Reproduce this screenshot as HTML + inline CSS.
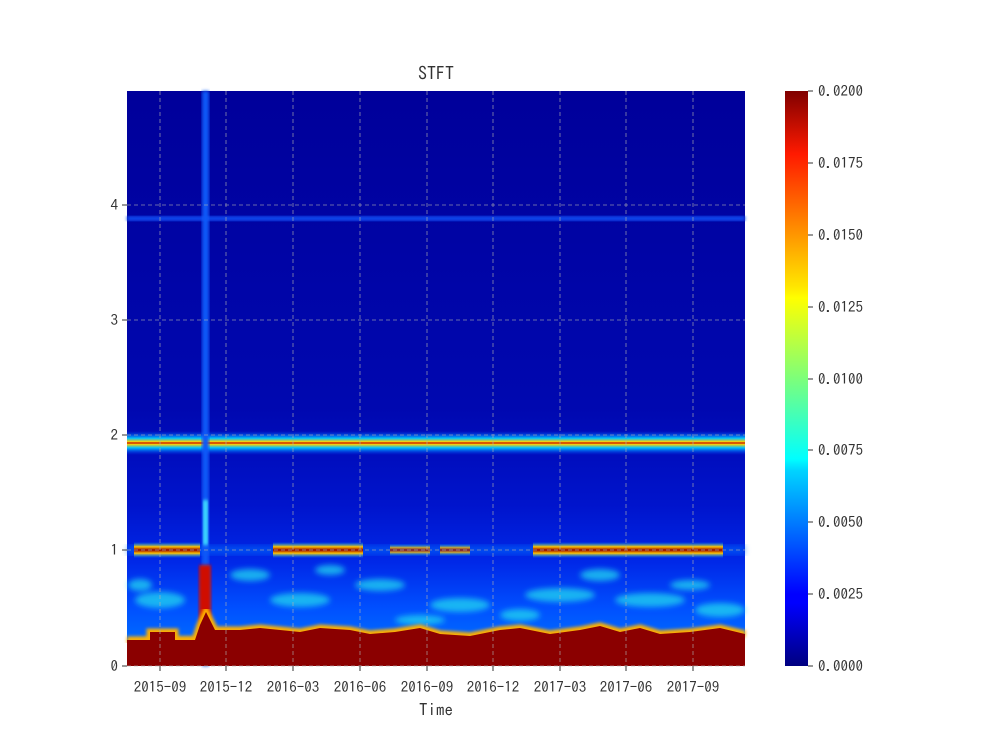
<!DOCTYPE html>
<html><head><meta charset="utf-8"><style>
body{margin:0;background:#fff;}
svg text{font-family:"IPAGothic","Liberation Sans",sans-serif;fill:#333;}
</style></head><body>
<svg width="1000" height="750" viewBox="0 0 1000 750" xmlns="http://www.w3.org/2000/svg">
<defs>
<linearGradient id="cb" x1="0" y1="1" x2="0" y2="0">
<stop offset="0" stop-color="#000080"/><stop offset="0.11" stop-color="#0000ff"/>
<stop offset="0.125" stop-color="#0000ff"/><stop offset="0.34" stop-color="#00d4ff"/>
<stop offset="0.36" stop-color="#0ff"/><stop offset="0.5" stop-color="#7dff7a"/>
<stop offset="0.64" stop-color="#ff0"/><stop offset="0.66" stop-color="#ffe600"/>
<stop offset="0.89" stop-color="#ff1a00"/><stop offset="1" stop-color="#800000"/>
</linearGradient>
<linearGradient id="bg" x1="0" y1="0" x2="0" y2="1">
<stop offset="0" stop-color="#00009a"/><stop offset="0.55" stop-color="#0008b0"/>
<stop offset="0.72" stop-color="#0014cc"/><stop offset="0.82" stop-color="#0028e8"/>
<stop offset="0.9" stop-color="#0050ff"/><stop offset="1" stop-color="#0080ff"/>
</linearGradient>
<linearGradient id="l2" x1="0" y1="0" x2="0" y2="1">
<stop offset="0" stop-color="#0040ff" stop-opacity="0"/><stop offset="0.3" stop-color="#00c0ff"/>
<stop offset="0.45" stop-color="#ffd000"/><stop offset="0.5" stop-color="#c00000"/>
<stop offset="0.55" stop-color="#ffd000"/><stop offset="0.7" stop-color="#00c0ff"/>
<stop offset="1" stop-color="#0040ff" stop-opacity="0"/>
</linearGradient>
<linearGradient id="l1" x1="0" y1="0" x2="0" y2="1">
<stop offset="0" stop-color="#00c0ff" stop-opacity="0"/><stop offset="0.3" stop-color="#ffc000"/>
<stop offset="0.5" stop-color="#900000"/><stop offset="0.7" stop-color="#ffc000"/>
<stop offset="1" stop-color="#00c0ff" stop-opacity="0"/>
</linearGradient>
<filter id="bl"><feGaussianBlur stdDeviation="1.5"/></filter>
<filter id="bl3"><feGaussianBlur stdDeviation="3"/></filter>
</defs>
<text x="436" y="80" font-size="18" fill="#000" text-anchor="middle">STFT</text>
<rect x="127" y="91" width="618" height="575" fill="url(#bg)"/>
<rect x="127" y="216" width="618" height="5" fill="#0848f0" filter="url(#bl)"/>
<rect x="127" y="431" width="618" height="24" fill="url(#l2)"/>
<g filter="url(#bl3)" fill="#20d8f0" opacity="0.75">
<ellipse cx="300" cy="600" rx="30" ry="7"/><ellipse cx="380" cy="585" rx="25" ry="6"/>
<ellipse cx="460" cy="605" rx="30" ry="7"/><ellipse cx="560" cy="595" rx="35" ry="7"/>
<ellipse cx="650" cy="600" rx="35" ry="7"/><ellipse cx="160" cy="600" rx="25" ry="8"/>
<ellipse cx="720" cy="610" rx="25" ry="7"/><ellipse cx="250" cy="575" rx="20" ry="6"/>
<ellipse cx="330" cy="570" rx="15" ry="5"/><ellipse cx="600" cy="575" rx="20" ry="6"/>
<ellipse cx="520" cy="615" rx="20" ry="6"/><ellipse cx="420" cy="620" rx="25" ry="5"/>
<ellipse cx="140" cy="585" rx="12" ry="6"/><ellipse cx="690" cy="585" rx="20" ry="5"/>
</g>
<rect x="127" y="545" width="618" height="10" fill="#0070ff" opacity="0.5" filter="url(#bl3)"/>
<rect x="134" y="542" width="66" height="16" fill="url(#l1)"/>
<rect x="273" y="542" width="90" height="16" fill="url(#l1)"/>
<rect x="390" y="544" width="40" height="12" fill="url(#l1)" opacity="0.8"/>
<rect x="440" y="544" width="30" height="12" fill="url(#l1)" opacity="0.8"/>
<rect x="533" y="542" width="190" height="16" fill="url(#l1)"/>
<rect x="202" y="91" width="7" height="575" fill="#0c58f8" filter="url(#bl)"/>
<rect x="203" y="500" width="5" height="45" fill="#40e0ff" filter="url(#bl)"/>
<rect x="199" y="565" width="12" height="65" fill="#d01000" filter="url(#bl)"/>
<polygon fill="none" stroke="#ffb000" stroke-width="7" filter="url(#bl)" points="127,640 150,640 150,632 175,632 175,640 195,640 200,625 206,612 215,630 240,630 260,628 300,632 320,628 350,630 370,634 395,632 420,628 440,634 470,636 500,630 520,628 550,634 580,630 600,626 620,632 640,628 660,634 690,632 720,628 745,634"/>
<polygon fill="#8b0000" points="127,640 150,640 150,632 175,632 175,640 195,640 200,625 206,612 215,630 240,630 260,628 300,632 320,628 350,630 370,634 395,632 420,628 440,634 470,636 500,630 520,628 550,634 580,630 600,626 620,632 640,628 660,634 690,632 720,628 745,634 745,666 127,666"/>
<g stroke="#b0b0b0" stroke-dasharray="4,3" stroke-width="0.8" opacity="0.8">
<line x1="160" y1="91" x2="160" y2="666"/><line x1="226" y1="91" x2="226" y2="666"/>
<line x1="293" y1="91" x2="293" y2="666"/><line x1="360" y1="91" x2="360" y2="666"/>
<line x1="427" y1="91" x2="427" y2="666"/><line x1="493" y1="91" x2="493" y2="666"/>
<line x1="560" y1="91" x2="560" y2="666"/><line x1="626" y1="91" x2="626" y2="666"/>
<line x1="693" y1="91" x2="693" y2="666"/>
<line x1="127" y1="666" x2="745" y2="666"/><line x1="127" y1="550" x2="745" y2="550"/>
<line x1="127" y1="435" x2="745" y2="435"/><line x1="127" y1="320" x2="745" y2="320"/>
<line x1="127" y1="205" x2="745" y2="205"/>
</g>
<g stroke="#333" stroke-width="1">
<line x1="122" y1="666" x2="127" y2="666"/><line x1="122" y1="550" x2="127" y2="550"/>
<line x1="122" y1="435" x2="127" y2="435"/><line x1="122" y1="320" x2="127" y2="320"/>
<line x1="122" y1="205" x2="127" y2="205"/>
<line x1="160" y1="666" x2="160" y2="671"/><line x1="226" y1="666" x2="226" y2="671"/>
<line x1="293" y1="666" x2="293" y2="671"/><line x1="360" y1="666" x2="360" y2="671"/>
<line x1="427" y1="666" x2="427" y2="671"/><line x1="493" y1="666" x2="493" y2="671"/>
<line x1="560" y1="666" x2="560" y2="671"/><line x1="626" y1="666" x2="626" y2="671"/>
<line x1="693" y1="666" x2="693" y2="671"/>
</g>
<g font-size="15" text-anchor="end">
<text x="118" y="671">0</text><text x="118" y="555">1</text><text x="118" y="440">2</text>
<text x="118" y="325">3</text><text x="118" y="210">4</text>
</g>
<g font-size="15" text-anchor="middle">
<text x="160" y="692">2015-09</text><text x="226" y="692">2015-12</text><text x="293" y="692">2016-03</text>
<text x="360" y="692">2016-06</text><text x="427" y="692">2016-09</text><text x="493" y="692">2016-12</text>
<text x="560" y="692">2017-03</text><text x="626" y="692">2017-06</text><text x="693" y="692">2017-09</text>
<text x="436" y="716" font-size="17">Time</text>
</g>
<rect x="785" y="91" width="23" height="575" fill="url(#cb)"/>
<g stroke="#333"><line x1="808" y1="91" x2="813" y2="91"/><line x1="808" y1="163" x2="813" y2="163"/>
<line x1="808" y1="235" x2="813" y2="235"/><line x1="808" y1="307" x2="813" y2="307"/>
<line x1="808" y1="379" x2="813" y2="379"/><line x1="808" y1="450" x2="813" y2="450"/>
<line x1="808" y1="522" x2="813" y2="522"/><line x1="808" y1="594" x2="813" y2="594"/>
<line x1="808" y1="666" x2="813" y2="666"/></g>
<g font-size="15">
<text x="818" y="96">0.0200</text><text x="818" y="168">0.0175</text><text x="818" y="240">0.0150</text>
<text x="818" y="312">0.0125</text><text x="818" y="384">0.0100</text><text x="818" y="455">0.0075</text>
<text x="818" y="527">0.0050</text><text x="818" y="599">0.0025</text><text x="818" y="671">0.0000</text>
</g>
</svg>
</body></html>
